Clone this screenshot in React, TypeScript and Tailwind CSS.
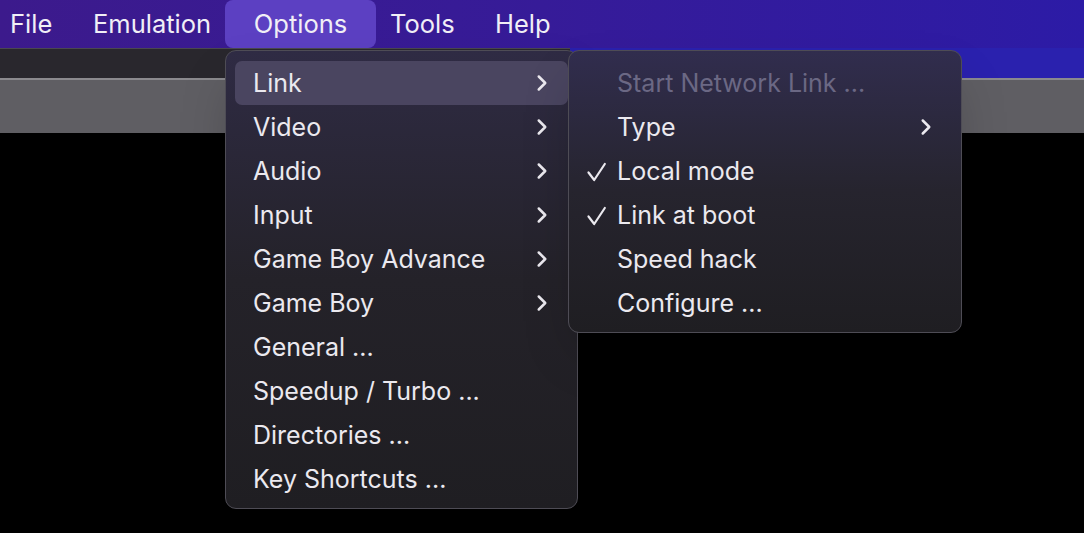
import { ChevronRight } from 'lucide-react';

const menuBar = [
  { label: 'File', cls: 'w-[83px] pl-[10px]' },
  { label: 'Emulation', cls: 'w-[142px] pl-[10px]' },
  { label: 'Options', cls: 'w-[151px] justify-center rounded-lg bg-[#5c40c2]' },
  { label: 'Tools', cls: 'w-[105px] pl-[14px]' },
  { label: 'Help', cls: 'pl-[14px]' },
];

const optionItems = [
  { label: 'Link', sub: true, active: true },
  { label: 'Video', sub: true },
  { label: 'Audio', sub: true },
  { label: 'Input', sub: true },
  { label: 'Game Boy Advance', sub: true },
  { label: 'Game Boy', sub: true },
  { label: 'General ...' },
  { label: 'Speedup / Turbo ...' },
  { label: 'Directories ...' },
  { label: 'Key Shortcuts ...' },
];

const linkItems = [
  { label: 'Start Network Link ...', disabled: true },
  { label: 'Type', sub: true },
  { label: 'Local mode', checked: true },
  { label: 'Link at boot', checked: true },
  { label: 'Speed hack' },
  { label: 'Configure ...' },
];

function CheckMark() {
  return (
    <svg width="21" height="20" viewBox="0 0 21 20" fill="none">
      <path
        d="M2.5 10.5 8.2 18 18.8 2"
        stroke="currentColor"
        strokeWidth="2.2"
        strokeLinecap="round"
        strokeLinejoin="round"
      />
    </svg>
  );
}

export default function App() {
  return (
    <div
      className="relative w-[1084px] h-[533px] overflow-hidden bg-black select-none"
      style={{ fontFamily: 'Inter, "Noto Sans", sans-serif' }}
    >
      {/* Menu bar */}
      <div className="h-12 flex bg-gradient-to-r from-[#3c1a8c] via-[#361b98] to-[#2c1ba6] text-[#f1eff6] text-[25.5px]">
        {menuBar.map((m) => (
          <div key={m.label} className={`h-12 flex items-center ${m.cls}`}>
            {m.label}
          </div>
        ))}
      </div>

      {/* Window chrome behind the menus */}
      <div className="flex h-[30px]">
        <div className="w-[570px] bg-[#29272d] border-t border-[#4a4850]" />
        <div className="flex-1 bg-[#2a21ae]" />
      </div>
      <div className="h-[55px] bg-[#5f5e63] border-t-2 border-[#8b8a8e]" />

      {/* Options menu */}
      <div className="absolute left-[225px] top-[50px] w-[353px] pt-[10px] pb-[7px] px-[9px] rounded-[11px] border border-[#4e4c55] bg-gradient-to-b from-[#2f2b44] via-[#242229] to-[#1f1e22] text-[#ebe9ef] text-[25px] shadow-2xl">
        {optionItems.map((it) => (
          <div
            key={it.label}
            className={`h-11 flex items-center justify-between pt-[2px] pl-[18px] pr-[13px] rounded-[7px] ${
              it.active ? 'bg-[#4a4560]' : ''
            }`}
          >
            <span>{it.label}</span>
            {it.sub && <ChevronRight className="w-[26px] h-[26px] -mt-[2px]" strokeWidth={2.3} />}
          </div>
        ))}
      </div>

      {/* Link submenu */}
      <div className="absolute left-[568px] top-[50px] w-[394px] pt-[10px] pb-[7px] px-[9px] rounded-[11px] border border-[#4e4c55] bg-gradient-to-b from-[#312d4e] via-[#26242e] to-[#1f1e22] text-[#ebe9ef] text-[25px] shadow-2xl">
        {linkItems.map((it) => (
          <div
            key={it.label}
            className="h-11 flex items-center justify-between pt-[2px] pl-[8px] pr-[13px] rounded-[7px]"
          >
            <div className="flex items-center">
              <span className="w-[31px] flex items-center">{it.checked && <CheckMark />}</span>
              <span className={it.disabled ? 'text-[#6b6884]' : ''}>{it.label}</span>
            </div>
            {it.sub && <ChevronRight className="w-[26px] h-[26px] -mt-[2px]" strokeWidth={2.3} />}
          </div>
        ))}
      </div>
    </div>
  );
}
